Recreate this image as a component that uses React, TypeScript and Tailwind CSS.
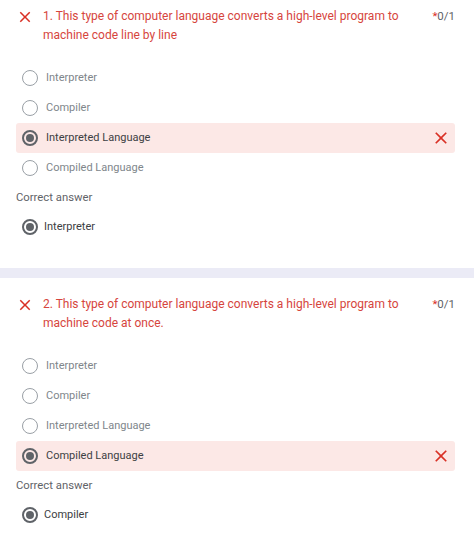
import React from "react";

const XIcon = ({ size = 18, className = "" }: { size?: number; className?: string }) => (
  <svg width={size} height={size} viewBox="0 0 24 24" className={className} fill="currentColor">
    <path d="M19 6.41L17.59 5 12 10.59 6.41 5 5 6.41 10.59 12 5 17.59 6.41 19 12 13.41 17.59 19 19 17.59 13.41 12z" />
  </svg>
);

const Radio = ({ checked }: { checked: boolean }) =>
  checked ? (
    <div className="w-[16px] h-[16px] rounded-full border-2 border-[#5f6368] flex items-center justify-center shrink-0">
      <div className="w-[8px] h-[8px] rounded-full bg-[#5f6368]" />
    </div>
  ) : (
    <div className="w-[16px] h-[16px] rounded-full border-[1.5px] border-[#9aa0a6] shrink-0" />
  );

type Opt = { label: string; selected?: boolean };

const Question = ({
  num,
  text,
  options,
  correct,
  top,
}: {
  num: number;
  text: string;
  options: Opt[];
  correct: string;
  top: string;
}) => (
  <div className={`pl-4 pr-[19px] ${top}`}>
    <div className="flex items-start">
      <div className="w-[27px] shrink-0 pt-[1px] text-[#d93025]">
        <XIcon size={18} />
      </div>
      <div className="flex-1 text-[12px] leading-[18.5px] text-[#d6453d] pr-2">
        {num}. {text}
      </div>
      <div className="w-[40px] shrink-0 text-right text-[11.5px] leading-[18.5px] text-[#5f6368]">
        <span className="text-[#d93025]">*</span>0/1
      </div>
    </div>
    <div className="mt-[19px] flex flex-col">
      {options.map((o) =>
        o.selected ? (
          <div key={o.label} className="h-[30px] flex items-center pl-[6px] pr-[4px] bg-[#fce8e6] rounded-[3px]">
            <Radio checked />
            <span className="ml-[8px] flex-1 text-[11px] text-[#3c4043]">{o.label}</span>
            <XIcon size={20} className="text-[#d93025]" />
          </div>
        ) : (
          <div key={o.label} className="h-[30px] flex items-center pl-[6px]">
            <Radio checked={false} />
            <span className="ml-[8px] text-[11px] text-[#80868b]">{o.label}</span>
          </div>
        )
      )}
      <div className="h-[30px] flex items-center text-[11.3px] text-[#5f6368]">Correct answer</div>
      <div className="h-[28px] flex items-center pl-[6px]">
        <Radio checked />
        <span className="ml-[6px] text-[11px] text-[#3c4043]">{correct}</span>
      </div>
    </div>
  </div>
);

export default function App() {
  return (
    <div className="w-[474px] h-[534px] bg-white overflow-hidden" style={{ fontFamily: "Roboto, 'Liberation Sans', sans-serif" }}>
      <Question
        num={1}
        top="pt-[7px] pb-[27px]"
        text="This type of computer language converts a high-level program to machine code line by line"
        options={[
          { label: "Interpreter" },
          { label: "Compiler" },
          { label: "Interpreted Language", selected: true },
          { label: "Compiled Language" },
        ]}
        correct="Interpreter"
      />
      <div className="h-[10px] bg-[#ebebf6]" />
      <Question
        num={2}
        top="pt-[17px]"
        text="This type of computer language converts a high-level program to machine code at once."
        options={[
          { label: "Interpreter" },
          { label: "Compiler" },
          { label: "Interpreted Language" },
          { label: "Compiled Language", selected: true },
        ]}
        correct="Compiler"
      />
    </div>
  );
}
